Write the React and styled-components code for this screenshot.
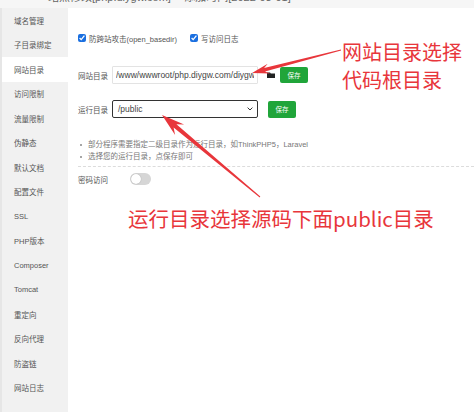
import React from "react";
import styled, { createGlobalStyle } from "styled-components";

const GlobalStyle = createGlobalStyle`
  html, body {
    margin: 0;
    padding: 0;
    background: #fff;
  }
  body {
    font-family: "Liberation Sans", "Noto Sans CJK SC", sans-serif;
  }
`;

const Page = styled.div`
  position: relative;
  width: 474px;
  height: 415px;
  overflow: hidden;
  display: flex;
  flex-direction: column;
`;

const TopBar = styled.div`
  height: 8px;
  flex-shrink: 0;
  background: #f6f6f6;
  overflow: hidden;
  padding-left: 48px;
`;

const TopText = styled.div`
  margin-top: -9px;
  font-size: 11px;
  line-height: 12px;
  color: #666;
  white-space: nowrap;
`;

const Body = styled.div`
  display: flex;
  flex: 1;
`;

const Sidebar = styled.ul`
  list-style: none;
  margin: 0;
  padding: 0 0 12px;
  width: 66px;
  flex-shrink: 0;
  align-self: flex-start;
  background: #f1f1f1;
  border-left: 2px solid #e6e6e6;
`;

const NavItem = styled.li`
  height: 24.5px;
  display: flex;
  align-items: center;
  padding-left: 12px;
  font-size: 7.5px;
  color: #555;
  background: ${(p) => (p.$active ? "#fff" : "transparent")};
`;

const Main = styled.div`
  flex: 1;
  display: flex;
  flex-direction: column;
  padding-left: 10px;
`;

const CheckRow = styled.div`
  margin-top: 24px;
  height: 12px;
  display: flex;
  align-items: center;
  gap: 13px;
  font-size: 7.5px;
  color: #555;
`;

const CheckLabel = styled.label`
  display: flex;
  align-items: center;
  gap: 3px;
`;

const Check = styled.input.attrs({ type: "checkbox", readOnly: true })`
  width: 8px;
  height: 8px;
  margin: 0;
  accent-color: #1a6fe0;
`;

const FieldRow = styled.div`
  margin-top: ${(p) => p.$mt}px;
  height: 18px;
  display: flex;
  align-items: center;
`;

const Label = styled.span`
  width: 34px;
  flex-shrink: 0;
  font-size: 7.5px;
  color: #555;
`;

const PathInput = styled.input.attrs({ readOnly: true })`
  width: 146px;
  height: 18px;
  box-sizing: border-box;
  margin: 0;
  padding: 0 3px;
  border: 1px solid #e3e3e3;
  border-radius: 1px;
  font-family: "Liberation Sans", "Noto Sans CJK SC", sans-serif;
  font-size: 8.5px;
  color: #444;
  outline: none;
`;

const SelectBox = styled.div`
  width: 146px;
  height: 18px;
  box-sizing: border-box;
  display: flex;
  align-items: center;
  justify-content: space-between;
  padding: 0 4px 0 5px;
  border: 1px solid #333;
  border-radius: 2px;
  font-size: 8.5px;
  color: #444;
`;

const FolderIcon = styled.svg`
  margin-left: 9px;
  width: 8px;
  height: 6px;
`;

const SaveButton = styled.button`
  margin-left: ${(p) => p.$ml}px;
  width: 28px;
  height: ${(p) => p.$h}px;
  padding: 0;
  border: none;
  border-radius: 2px;
  background: #20a53a;
  color: #fff;
  font-family: "Noto Sans CJK SC", sans-serif;
  font-size: 6.5px;
`;

const Tips = styled.ul`
  list-style: none;
  margin: 21px 0 0;
  padding: 0 0 3px;
  border-bottom: 1px dashed #dcdcdc;
`;

const Tip = styled.li`
  position: relative;
  height: 12px;
  line-height: 12px;
  padding-left: 10px;
  font-size: 7.5px;
  color: #777;
  white-space: nowrap;
  &::before {
    content: "";
    position: absolute;
    left: 2px;
    top: 5px;
    width: 2px;
    height: 2px;
    border-radius: 50%;
    background: #888;
  }
`;

const PwRow = styled.div`
  margin-top: 6px;
  height: 12px;
  display: flex;
  align-items: center;
`;

const PwLabel = styled(Label)`
  width: 52px;
`;

const Toggle = styled.span`
  position: relative;
  width: 21px;
  height: 12px;
  border-radius: 6px;
  background: #d6d6d6;
  &::after {
    content: "";
    position: absolute;
    left: 1px;
    top: 1px;
    width: 10px;
    height: 10px;
    border-radius: 50%;
    background: #fff;
    box-shadow: 0 0 1px rgba(0, 0, 0, 0.35);
  }
`;

const Note = styled.div`
  position: absolute;
  left: ${(p) => p.$x}px;
  top: ${(p) => p.$y}px;
  font-family: "Noto Sans CJK SC", "Liberation Sans", sans-serif;
  font-size: ${(p) => p.$size}px;
  line-height: ${(p) => p.$lh}px;
  color: #e8363b;
  white-space: nowrap;
`;

const Overlay = styled.svg`
  position: absolute;
  left: 0;
  top: 0;
  width: 474px;
  height: 415px;
  pointer-events: none;
`;

function arrowPoints([sx, sy], [tx, ty], head, headW, w0, w1) {
  const dx = tx - sx;
  const dy = ty - sy;
  const len = Math.hypot(dx, dy);
  const ux = dx / len;
  const uy = dy / len;
  const nx = -uy;
  const ny = ux;
  const bx = tx - ux * head;
  const by = ty - uy * head;
  const nb = 0.35 * head; // barbs swept back
  const pts = [
    [sx + nx * w0, sy + ny * w0],
    [bx + nx * w1, by + ny * w1],
    [bx - ux * nb + nx * headW, by - uy * nb + ny * headW],
    [tx, ty],
    [bx - ux * nb - nx * headW, by - uy * nb - ny * headW],
    [bx - nx * w1, by - ny * w1],
    [sx - nx * w0, sy - ny * w0],
  ];
  return pts.map((p) => p.map((v) => v.toFixed(1)).join(",")).join(" ");
}

const navItems = [
  "域名管理", "子目录绑定", "网站目录", "访问限制", "流量限制", "伪静态",
  "默认文档", "配置文件", "SSL", "PHP版本", "Composer", "Tomcat",
  "重定向", "反向代理", "防盗链", "网站日志",
];

export default function App() {
  return (
    <>
      <GlobalStyle />
      <Page>
        <TopBar>
          <TopText>站点修改[php.diygw.com] -- 添加时间[2022-03-01]</TopText>
        </TopBar>
        <Body>
          <Sidebar>
            {navItems.map((n) => (
              <NavItem key={n} $active={n === "网站目录"}>{n}</NavItem>
            ))}
          </Sidebar>
          <Main>
            <CheckRow>
              <CheckLabel><Check checked />防跨站攻击(open_basedir)</CheckLabel>
              <CheckLabel><Check checked />写访问日志</CheckLabel>
            </CheckRow>
            <FieldRow $mt={22}>
              <Label>网站目录</Label>
              <PathInput value="/www/wwwroot/php.diygw.com/diygw" />
              <FolderIcon viewBox="0 0 8 6">
                <path d="M0 0.6h3l0.8 0.8H8V6H0z" fill="#222" />
              </FolderIcon>
              <SaveButton $ml={5} $h={16}>保存</SaveButton>
            </FieldRow>
            <FieldRow $mt={16}>
              <Label>运行目录</Label>
              <SelectBox>
                <span>/public</span>
                <svg width="6" height="4" viewBox="0 0 6 4">
                  <path d="M0.6 0.6L3 3L5.4 0.6" fill="none" stroke="#333" strokeWidth="1" />
                </svg>
              </SelectBox>
              <SaveButton $ml={10} $h={17}>保存</SaveButton>
            </FieldRow>
            <Tips>
              <Tip>部分程序需要指定二级目录作为运行目录，如ThinkPHP5，Laravel</Tip>
              <Tip>选择您的运行目录，点保存即可</Tip>
            </Tips>
            <PwRow>
              <PwLabel>密码访问</PwLabel>
              <Toggle />
            </PwRow>
          </Main>
        </Body>
        <Note $x={342} $y={38} $size={20} $lh={28}>
          网站目录选择<br />代码根目录
        </Note>
        <Note $x={128} $y={205} $size={20.5} $lh={26}>
          运行目录选择源码下面public目录
        </Note>
        <Overlay viewBox="0 0 474 415">
          <polygon points={arrowPoints([341, 50], [252, 73], 13, 5, 0.5, 1.8)} fill="#e8363b" />
          <polygon points={arrowPoints([260, 197], [162, 115], 17, 7, 0.5, 2.2)} fill="#e8363b" />
        </Overlay>
      </Page>
    </>
  );
}
